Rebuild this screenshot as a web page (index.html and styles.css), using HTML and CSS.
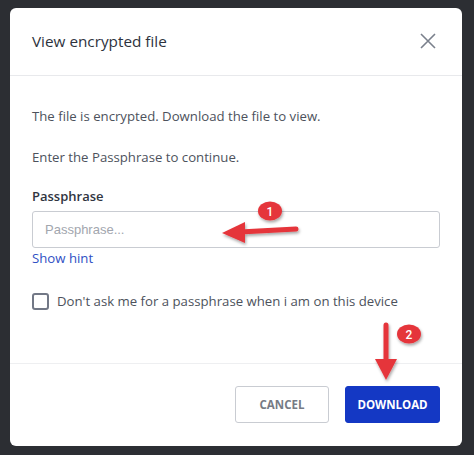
FILE: index.html
```html
<!DOCTYPE html>
<html>
<head>
<meta charset="utf-8">
<link rel="stylesheet" href="styles.css">
</head>
<body>
<div class="dialog">
  <div class="dlg-header">
    <h1 class="dlg-title">View encrypted file</h1>
    <button class="close-btn" aria-label="Close">
      <svg width="16" height="16" viewBox="0 0 16 16"><path d="M1 1 L15 15 M15 1 L1 15" stroke="#7a808c" stroke-width="1.6" fill="none"/></svg>
    </button>
  </div>
  <div class="dlg-body">
    <p class="msg">The file is encrypted. Download the file to view.</p>
    <p class="msg second">Enter the Passphrase to continue.</p>
    <label class="field-label">Passphrase</label>
    <input class="field-input" type="text" placeholder="Passphrase...">
    <a class="hint-link" href="#">Show hint</a>
    <label class="check-row"><span class="checkbox"></span><span>Don't ask me for a passphrase when i am on this device</span></label>
  </div>
  <div class="dlg-footer">
    <button class="btn btn-cancel">CANCEL</button>
    <button class="btn btn-primary">DOWNLOAD</button>
  </div>
</div>
<svg class="annotations" width="474" height="455" viewBox="0 0 474 455">
  <defs>
    <filter id="sh" x="-50%" y="-50%" width="200%" height="200%">
      <feDropShadow dx="1" dy="2" stdDeviation="1.5" flood-color="#000" flood-opacity="0.35"/>
    </filter>
  </defs>
  <g filter="url(#sh)">
    <line x1="296" y1="229" x2="240" y2="232" stroke="#e5353b" stroke-width="5" stroke-linecap="round"/>
    <polygon points="222,233 245,222 245,243" fill="#e5353b"/>
    <line x1="386" y1="325" x2="386" y2="362" stroke="#e5353b" stroke-width="5" stroke-linecap="round"/>
    <polygon points="375,359 397,359 386,380" fill="#e5353b"/>
    <ellipse cx="270" cy="211" rx="12" ry="9.5" fill="#e5353b"/>
    <ellipse cx="409" cy="334" rx="12" ry="9.5" fill="#e5353b"/>
  </g>
  <text x="270" y="215.5" class="badge-num">1</text>
  <text x="409" y="338.5" class="badge-num">2</text>
</svg>
</body>
</html>
```

FILE: styles.css
```css
* { box-sizing: border-box; }
html, body { margin: 0; }
body {
  width: 474px;
  height: 455px;
  background: #2c2e33;
  padding: 8px 12px 9px 10px;
  font-family: "Open Sans", "Noto Sans", sans-serif;
  position: relative;
  overflow: hidden;
}
.dialog {
  width: 452px;
  height: 438px;
  background: #fff;
  border-radius: 6px;
  display: flex;
  flex-direction: column;
}
.dlg-header {
  height: 68px;
  border-bottom: 1px solid #e8e9ec;
  display: flex;
  align-items: center;
  justify-content: space-between;
  padding: 0 26px 2px 22px;
}
.dlg-title {
  margin: 0;
  font-size: 15.3px;
  font-weight: 400;
  color: #2d323c;
}
.close-btn {
  background: none;
  border: 0;
  padding: 0;
  width: 16px;
  height: 16px;
  display: flex;
}
.dlg-body {
  padding: 30px 22px 0 22px;
  display: flex;
  flex-direction: column;
  align-items: flex-start;
  height: 288px;
  border-bottom: 1px solid #eeeff1;
}
.msg {
  margin: 0;
  font-size: 13.2px;
  line-height: 20px;
  color: #4d525c;
}
.msg.second { margin-top: 21px; }
.field-label {
  margin-top: 19px;
  font-size: 13px;
  line-height: 20px;
  font-weight: 600;
  color: #30353f;
}
.field-input {
  margin-top: 5px;
  width: 408px;
  height: 37px;
  border: 1px solid #c9ccd2;
  border-radius: 3px;
  padding: 0 12px;
  font-family: "Liberation Sans", Arial, sans-serif;
  font-size: 13px;
  outline: none;
}
.field-input::placeholder { color: #a2a6ae; }
.hint-link {
  font-size: 13.2px;
  line-height: 20px;
  color: #2f4fc4;
  text-decoration: none;
}
.check-row {
  margin-top: 23px;
  display: flex;
  align-items: center;
  gap: 8px;
  font-size: 13.2px;
  line-height: 20px;
  color: #4d525c;
}
.checkbox {
  width: 17px;
  height: 17px;
  border: 2px solid #727886;
  border-radius: 3px;
  background: #fff;
}
.dlg-footer {
  flex: 1;
  display: flex;
  justify-content: flex-end;
  align-items: flex-start;
  gap: 16px;
  padding: 22px 22px 0 0;
}
.btn {
  height: 37px;
  border-radius: 3px;
  font-family: "Open Sans", "Noto Sans", sans-serif;
  font-size: 11.5px;
  font-weight: 700;
  padding: 0;
}
.btn-cancel {
  width: 94px;
  background: #fff;
  border: 1px solid #c9ccd2;
  color: #767b85;
}
.btn-primary {
  width: 95px;
  background: #1438c4;
  border: 1px solid #1438c4;
  color: #fff;
}
.annotations {
  position: absolute;
  left: 0;
  top: 0;
  pointer-events: none;
}
.badge-num {
  font-family: "Roboto", "Liberation Sans", sans-serif;
  font-size: 12px;
  font-weight: 500;
  fill: #fff;
  text-anchor: middle;
}
```
